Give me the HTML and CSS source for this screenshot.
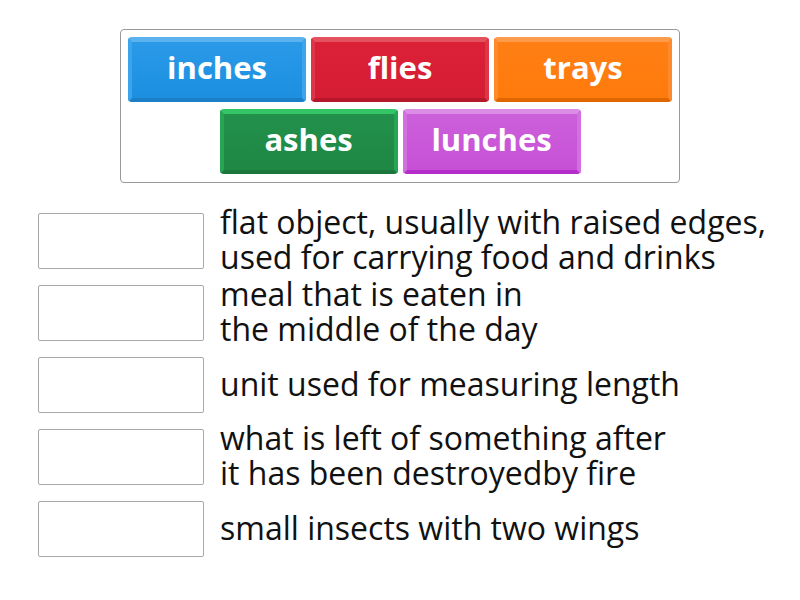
FILE: index.html
```html
<!DOCTYPE html>
<html lang="en">

<head>
    <meta charset="UTF-8">
    <meta name="viewport" content="width=device-width, initial-scale=1.0">
    <title>Match up</title>
    <link rel="stylesheet" href="styles.css">
</head>

<body>
    <div class="word-bank">
        <div class="tile-row">
            <div class="tile blue">inches</div>
            <div class="tile red">flies</div>
            <div class="tile orange">trays</div>
        </div>
        <div class="tile-row">
            <div class="tile green">ashes</div>
            <div class="tile purple">lunches</div>
        </div>
    </div>

    <div class="answers">
        <div class="answer">
            <div class="slot"></div>
            <p>flat object, usually with raised edges,<br>used for carrying food and drinks</p>
        </div>
        <div class="answer">
            <div class="slot"></div>
            <p>meal that is eaten in<br>the middle of the day</p>
        </div>
        <div class="answer">
            <div class="slot"></div>
            <p>unit used for measuring length</p>
        </div>
        <div class="answer">
            <div class="slot"></div>
            <p>what is left of something after<br>it has been destroyedby fire</p>
        </div>
        <div class="answer">
            <div class="slot"></div>
            <p>small insects with two wings</p>
        </div>
    </div>
</body>

</html>
```

FILE: styles.css
```css
body {
    margin: 0;
    background: #fff;
    font-family: "Open Sans", "Noto Sans", sans-serif;
}

/* Word bank at the top */
.word-bank {
    width: 544px;
    margin: 29px 0 0 120px;
    padding: 7px 7px 8px 7px;
    border: 1px solid #999;
    border-radius: 4px;
    display: flex;
    flex-direction: column;
    gap: 7px;
}

.tile-row {
    display: flex;
    justify-content: center;
    gap: 5px;
}

.tile {
    box-sizing: border-box;
    width: 178px;
    height: 65px;
    border-radius: 4px;
    border: 4px solid;
    border-top-width: 5px;
    color: #fff;
    font-size: 31px;
    font-weight: 700;
    text-align: center;
    line-height: 50px;
}

.blue {
    background: linear-gradient(#2a9ae8, #1c8fe0);
    border-color: #5ab3ef #3aa4ec #1a7fc6 #3aa4ec;
}

.red {
    background: linear-gradient(#dc2137, #d41c33);
    border-color: #e4515f #df3548 #b5172b #df3548;
}

.orange {
    background: linear-gradient(#ff7f14, #ff7a0c);
    border-color: #ff9c4c #ff8a2c #e06600 #ff8a2c;
}

.green {
    background: linear-gradient(#22904b, #1e8844);
    border-color: #33c566 #27a553 #1a763b #27a553;
}

.purple {
    background: linear-gradient(#cc60da, #c750d6);
    border-color: #dc8de6 #d270df #b52ecb #d270df;
}

/* Definitions with empty slots */
.answers {
    margin-top: 30px;
    padding-left: 38px;
    display: flex;
    flex-direction: column;
    gap: 16px;
}

.answer {
    display: flex;
    align-items: center;
    gap: 16px;
    height: 56px;
}

.slot {
    box-sizing: border-box;
    width: 166px;
    height: 56px;
    border: 1px solid #a8a8a8;
    border-radius: 2px;
    flex-shrink: 0;
}

.answer p {
    margin: -4px 0 0 0;
    font-size: 32px;
    line-height: 35px;
    color: #111;
    white-space: nowrap;
}
```
